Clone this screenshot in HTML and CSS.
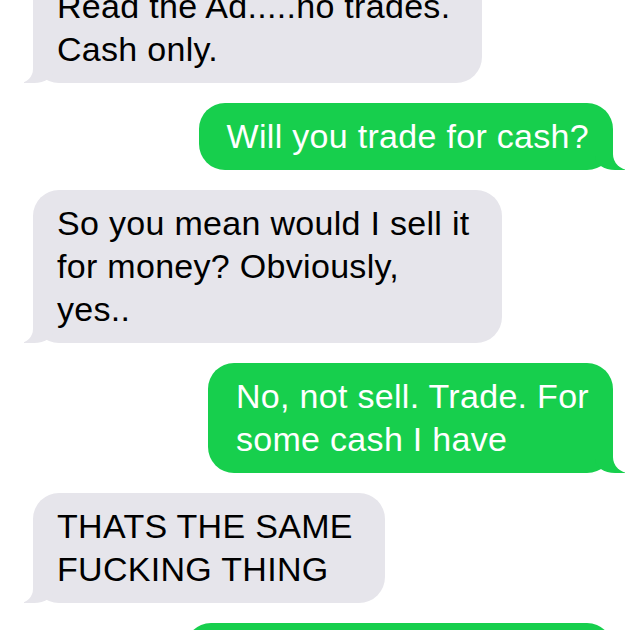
FILE: index.html
```html
<!DOCTYPE html>
<html lang="en">
<head>
    <meta charset="UTF-8" />
    <meta name="viewport" content="width=device-width, initial-scale=1.0" />
    <title>Messages</title>
    <link rel="stylesheet" href="styles.css">
</head>
<body>
    <div class="thread">
        <div class="bubble them">Read the Ad.....no trades.<br>Cash only.</div>
        <div class="bubble me">Will you trade for cash?</div>
        <div class="bubble them">So you mean would I sell it<br>for money? Obviously,<br>yes..</div>
        <div class="bubble me">No, not sell. Trade. For<br>some cash I have</div>
        <div class="bubble them">THATS THE SAME<br>FUCKING THING</div>
        <div class="bubble me next">&nbsp;</div>
    </div>
</body>
</html>
```

FILE: styles.css
```css
body{
    margin: 0;
    background-color: #fff;
    overflow: hidden;
}
.thread{
    display: flex;
    flex-direction: column;
    gap: 20px;
    margin-top: -27px;
    padding: 0 24px 0 33px;
}
.bubble{
    position: relative;
    font-family: "Liberation Sans", Arial, sans-serif;
    font-size: 34px;
    line-height: 43px;
    letter-spacing: 0.3px;
    white-space: nowrap;
    border-radius: 26px;
    padding: 12px 32px 12px 24px;
}
.them{
    align-self: flex-start;
    background-color: #e6e5eb;
    color: #000;
}
.me{
    align-self: flex-end;
    background-color: #17cf4d;
    color: #fff;
    padding: 12px 24px 12px 28px;
}
/* tails */
.them::before{
    content: "";
    position: absolute;
    left: -9px;
    bottom: 0;
    width: 30px;
    height: 26px;
    background-color: #e6e5eb;
    border-bottom-right-radius: 20px 14px;
}
.them::after{
    content: "";
    position: absolute;
    left: -14px;
    bottom: 0;
    width: 14px;
    height: 26px;
    background-color: #fff;
    border-bottom-right-radius: 14px;
}
.me::before{
    content: "";
    position: absolute;
    right: -12px;
    bottom: 0;
    width: 30px;
    height: 26px;
    background-color: #17cf4d;
    border-bottom-left-radius: 20px 14px;
}
.me::after{
    content: "";
    position: absolute;
    right: -16px;
    bottom: 0;
    width: 16px;
    height: 26px;
    background-color: #fff;
    border-bottom-left-radius: 16px;
}
.next{
    width: 376px;
}
```
